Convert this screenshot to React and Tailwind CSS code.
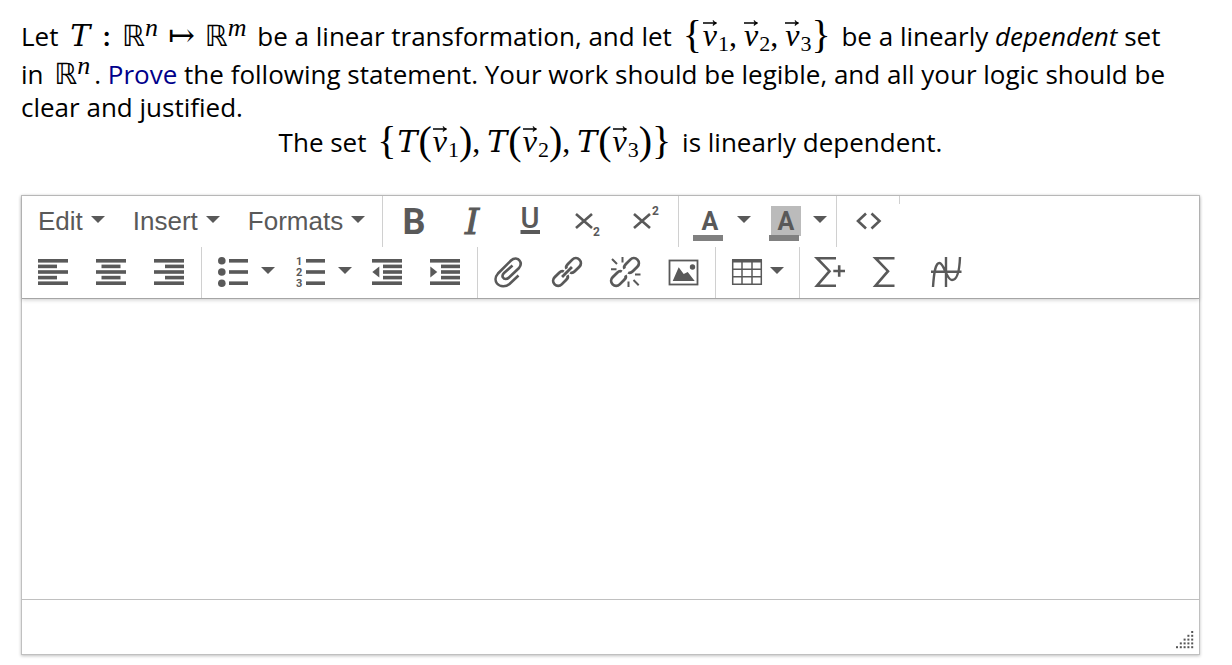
import React from "react";

const Caret = () => (
  <span className="mb-1 border-x-[7px] border-t-[7px] border-x-transparent border-t-[#595959]"></span>
);

const Icon = ({ children }) => (
  <svg viewBox="0 0 30 30" className="w-[30px] h-[30px] shrink-0 overflow-visible" fill="currentColor">
    {children}
  </svg>
);

const Group = ({ children }) => (
  <div className="flex h-[51px] border-r border-[#d0d0d0] pl-[2px] pr-[3px]">{children}</div>
);

const IconButton = ({ label, children }) => (
  <button aria-label={label} className="flex items-center px-[14px] pb-px">
    <Icon>{children}</Icon>
  </button>
);

const MenuButton = ({ children }) => (
  <button className="flex items-center gap-2 px-[14px] text-[26px]">
    {children}
    <Caret />
  </button>
);

const SplitButton = ({ label, children }) => (
  <button aria-label={label} className="flex items-center gap-[13px] pl-[14px] pr-[6px] pb-px">
    <Icon>{children}</Icon>
    <Caret />
  </button>
);

const ColorButton = ({ label, children }) => (
  <button aria-label={label} className="flex items-center gap-3 pl-[14px] pr-[6px] pb-px">
    <Icon>
      {children}
      <text x="15" y="24" textAnchor="middle" className="font-['Roboto',sans-serif] font-bold text-[25px]">A</text>
      <rect x="-2" y="29" width="30" height="6" fill="#808080" />
    </Icon>
    <Caret />
  </button>
);

const Bars = ({ rows }) =>
  rows.map(([x, y, w]) => <rect key={y} x={x} y={y} width={w} height="3.6" />);

const T = () => <i className="inline-block mx-px font-['DejaVu_Serif',serif] text-[30px] leading-[29px]">T</i>;

const Reals = ({ power }) => (
  <>
    <span className="inline-block font-['DejaVu_Sans',sans-serif] text-[29px] leading-[29px]">ℝ</span>
    <i className="inline-block align-[10px] text-[26px] leading-[22px]">{power}</i>
  </>
);

const Rel = ({ children }) => (
  <span className="inline-block mx-[10px] font-['DejaVu_Serif',serif] leading-[29px]">{children}</span>
);

const Comma = () => <span className="mr-[6px]">,</span>;

const Vec = ({ n }) => (
  <>
    <i className="relative inline-block mx-px leading-[31px]">
      v
      <svg viewBox="0 0 14 6" className="absolute left-0 top-0 w-[14px] h-[6px]" fill="none" stroke="currentColor" strokeWidth="1.3">
        <path d="M0 3H13M10 0.5Q11 2.5 13.5 3Q11 3.5 10 5.5" />
      </svg>
    </i>
    <span className="inline-block align-[-5px] text-[22px] leading-none">{n}</span>
  </>
);

const Big = ({ children }) => (
  <span className="inline-block align-[-2px] text-[40px] leading-[36px]">{children}</span>
);

const Formula = ({ children }) => (
  <span className="inline-block mx-1 whitespace-nowrap font-['Liberation_Serif',serif] text-[32px] leading-[37px]">
    {children}
  </span>
);

const Question = () => (
  <div className="font-['Open_Sans',sans-serif] text-[26px] leading-[31px] text-black">
    <p className="pr-6">
      Let{" "}
      <Formula>
        <T /><Rel>:</Rel><Reals power="n" /><Rel>↦</Rel><Reals power="m" />
      </Formula>{" "}
      be a linear transformation, and let{" "}
      <Formula>
        <Big>{"{"}</Big><Vec n="1" /><Comma /><Vec n="2" /><Comma /><Vec n="3" /><Big>{"}"}</Big>
      </Formula>{" "}
      be a linearly <i>dependent</i> set in <Formula><Reals power="n" /></Formula>.{" "}
      <a href="#prove" className="text-[#00008b]">Prove</a> the following statement. Your work should be legible, and
      all your logic should be clear and justified.
    </p>
    <p className="text-center">
      The set{" "}
      <Formula>
        <Big>{"{"}</Big><T /><Big>(</Big><Vec n="1" /><Big>)</Big><Comma />
        <T /><Big>(</Big><Vec n="2" /><Big>)</Big><Comma />
        <T /><Big>(</Big><Vec n="3" /><Big>)</Big><Big>{"}"}</Big>
      </Formula>{" "}
      is linearly dependent.
    </p>
  </div>
);

const Toolbar = () => (
  <div className="relative border-b border-[#a5a5a5] text-[#595959] shadow-[0_1px_4px_rgba(0,0,0,0.2)] font-['Liberation_Sans',sans-serif]">
    <div className="flex">
      <Group>
        <MenuButton>Edit</MenuButton>
        <MenuButton>Insert</MenuButton>
        <MenuButton>Formats</MenuButton>
      </Group>
      <Group>
        <IconButton label="Bold">
          <text x="15" y="28" textAnchor="middle" className="font-['Roboto',sans-serif] font-bold text-[36px]">B</text>
        </IconButton>
        <IconButton label="Italic">
          <text x="15" y="28" textAnchor="middle" stroke="currentColor" strokeWidth="1" className="font-['DejaVu_Serif',serif] italic text-[36px]">I</text>
        </IconButton>
        <IconButton label="Underline">
          <text x="15" y="22" textAnchor="middle" className="font-['Roboto',sans-serif] font-medium text-[29px]">U</text>
          <rect x="5.5" y="24" width="19.5" height="4" />
        </IconButton>
        <IconButton label="Subscript">
          <path d="M3 8L19 22M19 8L3 22" fill="none" stroke="currentColor" strokeWidth="2.6" />
          <text x="20" y="30" className="font-['Roboto',sans-serif] font-bold text-[12px]">2</text>
        </IconButton>
        <IconButton label="Superscript">
          <path d="M3 8L19 22M19 8L3 22" fill="none" stroke="currentColor" strokeWidth="2.6" />
          <text x="21" y="9" className="font-['Roboto',sans-serif] font-bold text-[12px]">2</text>
        </IconButton>
      </Group>
      <Group>
        <ColorButton label="Text color" />
        <ColorButton label="Background color">
          <rect width="30" height="30" fill="#bbb" />
        </ColorButton>
      </Group>
      <div className="flex px-[2px]">
        <IconButton label="Source code">
          <path d="M13 7.5L5 15L13 22.5M18.5 7.5L26.5 15L18.5 22.5" fill="none" stroke="currentColor" strokeWidth="2.6" />
        </IconButton>
      </div>
      <div className="h-2 border-l border-[#d0d0d0]"></div>
    </div>
    <div className="flex">
      <Group>
        <IconButton label="Align left">
          <Bars rows={[[0, 2, 30], [0, 7.6, 19], [0, 13.2, 30], [0, 18.8, 19], [0, 24.4, 30]]} />
        </IconButton>
        <IconButton label="Align center">
          <Bars rows={[[0, 2, 30], [5.5, 7.6, 19], [0, 13.2, 30], [5.5, 18.8, 19], [0, 24.4, 30]]} />
        </IconButton>
        <IconButton label="Align right">
          <Bars rows={[[0, 2, 30], [11, 7.6, 19], [0, 13.2, 30], [11, 18.8, 19], [0, 24.4, 30]]} />
        </IconButton>
      </Group>
      <Group>
        <SplitButton label="Bullet list">
          <circle cx="3.8" cy="3.8" r="3.8" />
          <circle cx="3.8" cy="15" r="3.8" />
          <circle cx="3.8" cy="26.2" r="3.8" />
          <Bars rows={[[11, 2, 19], [11, 13.2, 19], [11, 24.4, 19]]} />
        </SplitButton>
        <SplitButton label="Numbered list">
          <g className="font-['Roboto',sans-serif] font-bold text-[11px]">
            <text x="1" y="8">1</text>
            <text x="1" y="19">2</text>
            <text x="1" y="30">3</text>
          </g>
          <Bars rows={[[11, 2, 19], [11, 13.2, 19], [11, 24.4, 19]]} />
        </SplitButton>
        <IconButton label="Decrease indent">
          <Bars rows={[[0, 2, 30], [11, 7.6, 19], [11, 13.2, 19], [11, 18.8, 19], [0, 24.4, 30]]} />
          <path d="M0.3 15L7.3 9.5V20.5Z" />
        </IconButton>
        <IconButton label="Increase indent">
          <Bars rows={[[0, 2, 30], [11, 7.6, 19], [11, 13.2, 19], [11, 18.8, 19], [0, 24.4, 30]]} />
          <path d="M7.3 15L0.3 9.5V20.5Z" />
        </IconButton>
      </Group>
      <Group>
        <IconButton label="Attach file">
          <path d="M24.5 18.5L15.5 27C12 30 6 30 3 26.5C1 24 1 20 4 16.5L17 3.5C20 0.5 24 1 25.5 3.5C27.5 6 27 8.5 25 11L15 20.5C13 22.5 10 22.5 9 20.5C8 19 8.5 17.5 10 16L18.5 8.5" fill="none" stroke="currentColor" strokeWidth="2.6" />
        </IconButton>
        <IconButton label="Insert link">
          <g transform="rotate(-45 15 15)" fill="none" stroke="currentColor" strokeWidth="2.8">
            <path d="M13 17.5Q12.5 20 9 20H2.5A5 5 0 0 1 2.5 10H9Q12.5 10 13 12.5M17 12.5Q17.5 10 21 10H27.5A5 5 0 0 1 27.5 20H21Q17.5 20 17 17.5" />
            <path d="M8 15H22" />
          </g>
        </IconButton>
        <IconButton label="Remove link">
          <g fill="none" stroke="currentColor" strokeWidth="2.8">
            <path transform="rotate(-45 15 15)" d="M13 17.5Q12.5 20 9 20H2.5A5 5 0 0 1 2.5 10H9Q12.5 10 13 12.5M17 12.5Q17.5 10 21 10H27.5A5 5 0 0 1 27.5 20H21Q17.5 20 17 17.5" />
            <path strokeWidth="2" d="M2 2L7 7M12.5 0V5.5M1 12.3H6.5M18.5 24.5V30M23.5 23L28.7 28.2M25 17.5H30.5" />
          </g>
        </IconButton>
        <IconButton label="Insert image">
          <rect x="1.5" y="3.5" width="28" height="24" fill="none" stroke="currentColor" strokeWidth="1.8" />
          <path d="M4.7 24L10.7 10.3L15.7 17L19.7 15L26.7 24Z" />
          <circle cx="24.5" cy="10" r="2.7" />
        </IconButton>
      </Group>
      <Group>
        <button aria-label="Table" className="flex items-center gap-2 pl-[14px] pr-3 pb-px">
          <Icon>
            <path d="M0.7 3V27.3H29.3V3M10 4V27M20 4V27M0 12.3H30M0 19.7H30" fill="none" stroke="currentColor" strokeWidth="1.5" />
            <rect y="2" width="30" height="3.5" />
          </Icon>
          <Caret />
        </button>
      </Group>
      <div className="flex pl-px">
        <IconButton label="Insert new equation">
          <path d="M21 1.2H2L14.5 14.2L2 28.7H21M18.3 14H30M24.2 8.2V19.8" fill="none" stroke="currentColor" strokeWidth="2.6" />
        </IconButton>
        <IconButton label="Edit equation">
          <path d="M21.5 1.2H2.5L15 14.2L2.5 28.7H21.5" fill="none" stroke="currentColor" strokeWidth="2.6" />
        </IconButton>
        <IconButton label="Insert graph">
          <path d="M0 14.8H30.5M15 0V30M2 30C3 15 4.5 6 8.5 6C13 6 15.5 23 21 23C26 23 28.5 14 29 0" fill="none" stroke="currentColor" strokeWidth="2.4" />
        </IconButton>
      </div>
    </div>
  </div>
);

const ResizeGrip = () => (
  <svg viewBox="0 0 18 18" className="w-[18px] h-[18px]" fill="#555">
    {[0, 1, 2, 3, 4].map((r) =>
      [0, 1, 2, 3, 4].filter((c) => c + r >= 4).map((c) => (
        <rect key={`${r}${c}`} x={c * 3.8} y={r * 3.8} width="2" height="2" />
      ))
    )}
  </svg>
);

const App = () => {
  return (
    <div className="bg-white pl-[21px] pr-8 pt-[17px] pb-[10px]">
      <Question />
      <div className="mt-[34px] border border-[#c0c0c0] shadow-[0_1px_3px_rgba(0,0,0,0.25)]">
        <Toolbar />
        <textarea
          aria-label="Answer"
          className="block w-full h-[300px] resize-none p-4 text-[26px] font-['Liberation_Sans',sans-serif] outline-none"
        ></textarea>
        <div className="flex h-[55px] items-end justify-end border-t border-[#c0c0c0] p-[5px]">
          <ResizeGrip />
        </div>
      </div>
    </div>
  );
};

export default App;
